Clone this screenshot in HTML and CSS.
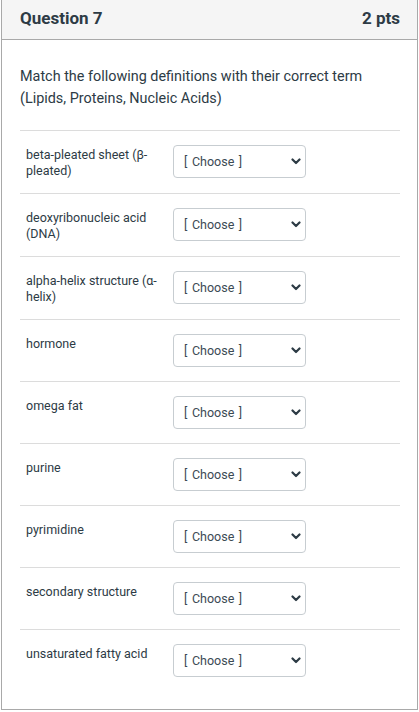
FILE: index.html
```html
<!DOCTYPE html>
<html>
<head>
<meta charset="utf-8">
<link rel="stylesheet" href="styles.css">
</head>
<body>
<div class="card">
  <div class="header">
    <span class="title">Question 7</span>
    <span class="pts">2 pts</span>
  </div>
  <div class="body">
    <p class="desc">Match the following definitions with their correct term (Lipids, Proteins, Nucleic Acids)</p>
    <div class="rows">
      <div class="row"><div class="label">beta-pleated sheet (β-pleated)</div><div class="sel"><select><option>[ Choose ]</option></select><svg class="chev" width="10" height="7" viewBox="0 0 10 7"><path d="M1.5 1.5 L5 5 L8.5 1.5" fill="none" stroke="#2d3b45" stroke-width="2.2" stroke-linecap="round" stroke-linejoin="round"/></svg></div></div>
      <div class="row"><div class="label">deoxyribonucleic acid (DNA)</div><div class="sel"><select><option>[ Choose ]</option></select><svg class="chev" width="10" height="7" viewBox="0 0 10 7"><path d="M1.5 1.5 L5 5 L8.5 1.5" fill="none" stroke="#2d3b45" stroke-width="2.2" stroke-linecap="round" stroke-linejoin="round"/></svg></div></div>
      <div class="row"><div class="label">alpha-helix structure (α-helix)</div><div class="sel"><select><option>[ Choose ]</option></select><svg class="chev" width="10" height="7" viewBox="0 0 10 7"><path d="M1.5 1.5 L5 5 L8.5 1.5" fill="none" stroke="#2d3b45" stroke-width="2.2" stroke-linecap="round" stroke-linejoin="round"/></svg></div></div>
      <div class="row"><div class="label">hormone</div><div class="sel"><select><option>[ Choose ]</option></select><svg class="chev" width="10" height="7" viewBox="0 0 10 7"><path d="M1.5 1.5 L5 5 L8.5 1.5" fill="none" stroke="#2d3b45" stroke-width="2.2" stroke-linecap="round" stroke-linejoin="round"/></svg></div></div>
      <div class="row"><div class="label">omega fat</div><div class="sel"><select><option>[ Choose ]</option></select><svg class="chev" width="10" height="7" viewBox="0 0 10 7"><path d="M1.5 1.5 L5 5 L8.5 1.5" fill="none" stroke="#2d3b45" stroke-width="2.2" stroke-linecap="round" stroke-linejoin="round"/></svg></div></div>
      <div class="row"><div class="label">purine</div><div class="sel"><select><option>[ Choose ]</option></select><svg class="chev" width="10" height="7" viewBox="0 0 10 7"><path d="M1.5 1.5 L5 5 L8.5 1.5" fill="none" stroke="#2d3b45" stroke-width="2.2" stroke-linecap="round" stroke-linejoin="round"/></svg></div></div>
      <div class="row"><div class="label">pyrimidine</div><div class="sel"><select><option>[ Choose ]</option></select><svg class="chev" width="10" height="7" viewBox="0 0 10 7"><path d="M1.5 1.5 L5 5 L8.5 1.5" fill="none" stroke="#2d3b45" stroke-width="2.2" stroke-linecap="round" stroke-linejoin="round"/></svg></div></div>
      <div class="row"><div class="label">secondary structure</div><div class="sel"><select><option>[ Choose ]</option></select><svg class="chev" width="10" height="7" viewBox="0 0 10 7"><path d="M1.5 1.5 L5 5 L8.5 1.5" fill="none" stroke="#2d3b45" stroke-width="2.2" stroke-linecap="round" stroke-linejoin="round"/></svg></div></div>
      <div class="row"><div class="label">unsaturated fatty acid</div><div class="sel"><select><option>[ Choose ]</option></select><svg class="chev" width="10" height="7" viewBox="0 0 10 7"><path d="M1.5 1.5 L5 5 L8.5 1.5" fill="none" stroke="#2d3b45" stroke-width="2.2" stroke-linecap="round" stroke-linejoin="round"/></svg></div></div>
    </div>
  </div>
</div>
</body>
</html>
```
FILE: styles.css
```css
html, body {
  margin: 0;
  padding: 0;
  background: #ffffff;
}
body {
  font-family: Roboto, "Liberation Sans", sans-serif;
  color: #2d3b45;
}
.card {
  box-sizing: border-box;
  width: 417px;
  height: 710px;
  margin-left: 1px;
  border: 1px solid #a9a9a9;
  border-top: none;
}
.header {
  box-sizing: border-box;
  height: 40px;
  background: #f5f5f5;
  border-bottom: 1px solid #a9a9a9;
  display: flex;
  justify-content: space-between;
  align-items: center;
  padding: 0 17px 3px 18px;
  font-weight: bold;
  font-size: 17px;
  color: #2d3b45;
}
.body {
  padding: 26px 17px 0 18px;
}
.desc {
  margin: 0 0 20px 0;
  font-size: 14.4px;
  line-height: 22px;
}
.row {
  display: flex;
  align-items: flex-start;
  gap: 7px;
  border-top: 1px solid #dcdcdc;
  padding: 14px 0 14px 6px;
}
.label {
  width: 140px;
  padding-top: 2px;
  font-size: 12.5px;
  line-height: 16px;
}
.sel {
  position: relative;
  width: 133px;
  height: 33px;
}
.sel select {
  box-sizing: border-box;
  width: 133px;
  height: 33px;
  appearance: none;
  -webkit-appearance: none;
  background: #ffffff;
  border: 1px solid #c7cdd1;
  border-radius: 4px;
  padding: 0 0 0 10px;
  font-family: Roboto, "Liberation Sans", sans-serif;
  font-size: 12.5px;
  word-spacing: 1.5px;
  color: #3b4a54;
  margin: 0;
}
.chev {
  position: absolute;
  right: 5px;
  top: 13px;
  pointer-events: none;
}
```
